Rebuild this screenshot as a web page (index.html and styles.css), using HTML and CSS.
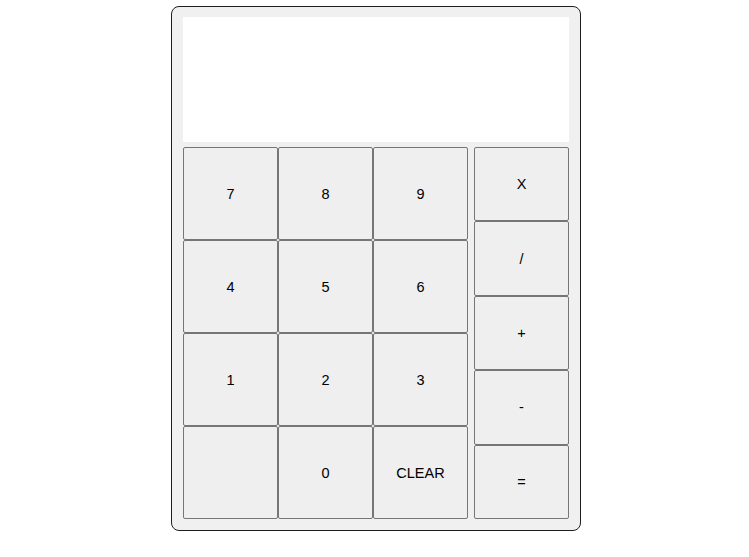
FILE: index.html
```html
<!DOCTYPE html>
<html>
<head>
<meta charset="utf-8">
<link rel="stylesheet" href="styles.css">
</head>
<body>
<div class="calc">
  <div class="display"></div>
  <div class="keys">
    <div class="digits">
      <button class="key">7</button>
      <button class="key">8</button>
      <button class="key">9</button>
      <button class="key">4</button>
      <button class="key">5</button>
      <button class="key">6</button>
      <button class="key">1</button>
      <button class="key">2</button>
      <button class="key">3</button>
      <button class="key"></button>
      <button class="key">0</button>
      <button class="key">CLEAR</button>
    </div>
    <div class="ops">
      <button class="key op">X</button>
      <button class="key op">/</button>
      <button class="key op">+</button>
      <button class="key op">-</button>
      <button class="key op">=</button>
    </div>
  </div>
</div>
</body>
</html>
```
FILE: styles.css
```css
html, body {
  margin: 0;
  padding: 0;
  background: #ffffff;
}
body {
  padding-top: 6px;
  padding-left: 171px;
}
.calc {
  box-sizing: border-box;
  width: 410px;
  height: 525px;
  border: 1px solid #1e1e1e;
  border-radius: 8px;
  background: #f0f0f0;
  padding: 10px 11px 11px 11px;
}
.display {
  height: 125px;
  background: #ffffff;
  margin-bottom: 5px;
}
.keys {
  display: flex;
  gap: 6px;
  height: 372px;
}
.digits {
  display: grid;
  grid-template-columns: repeat(3, 95px);
  grid-template-rows: repeat(4, 93px);
}
.ops {
  display: flex;
  flex-direction: column;
  width: 95px;
}
.key {
  box-sizing: border-box;
  margin: 0;
  padding: 0;
  width: 95px;
  border: 1px solid #767676;
  border-radius: 2px;
  background: #efefef;
  color: #000000;
  font-family: "Liberation Sans", Arial, sans-serif;
  font-size: 14.5px;
}
.op {
  flex: 1 1 0;
}
```
